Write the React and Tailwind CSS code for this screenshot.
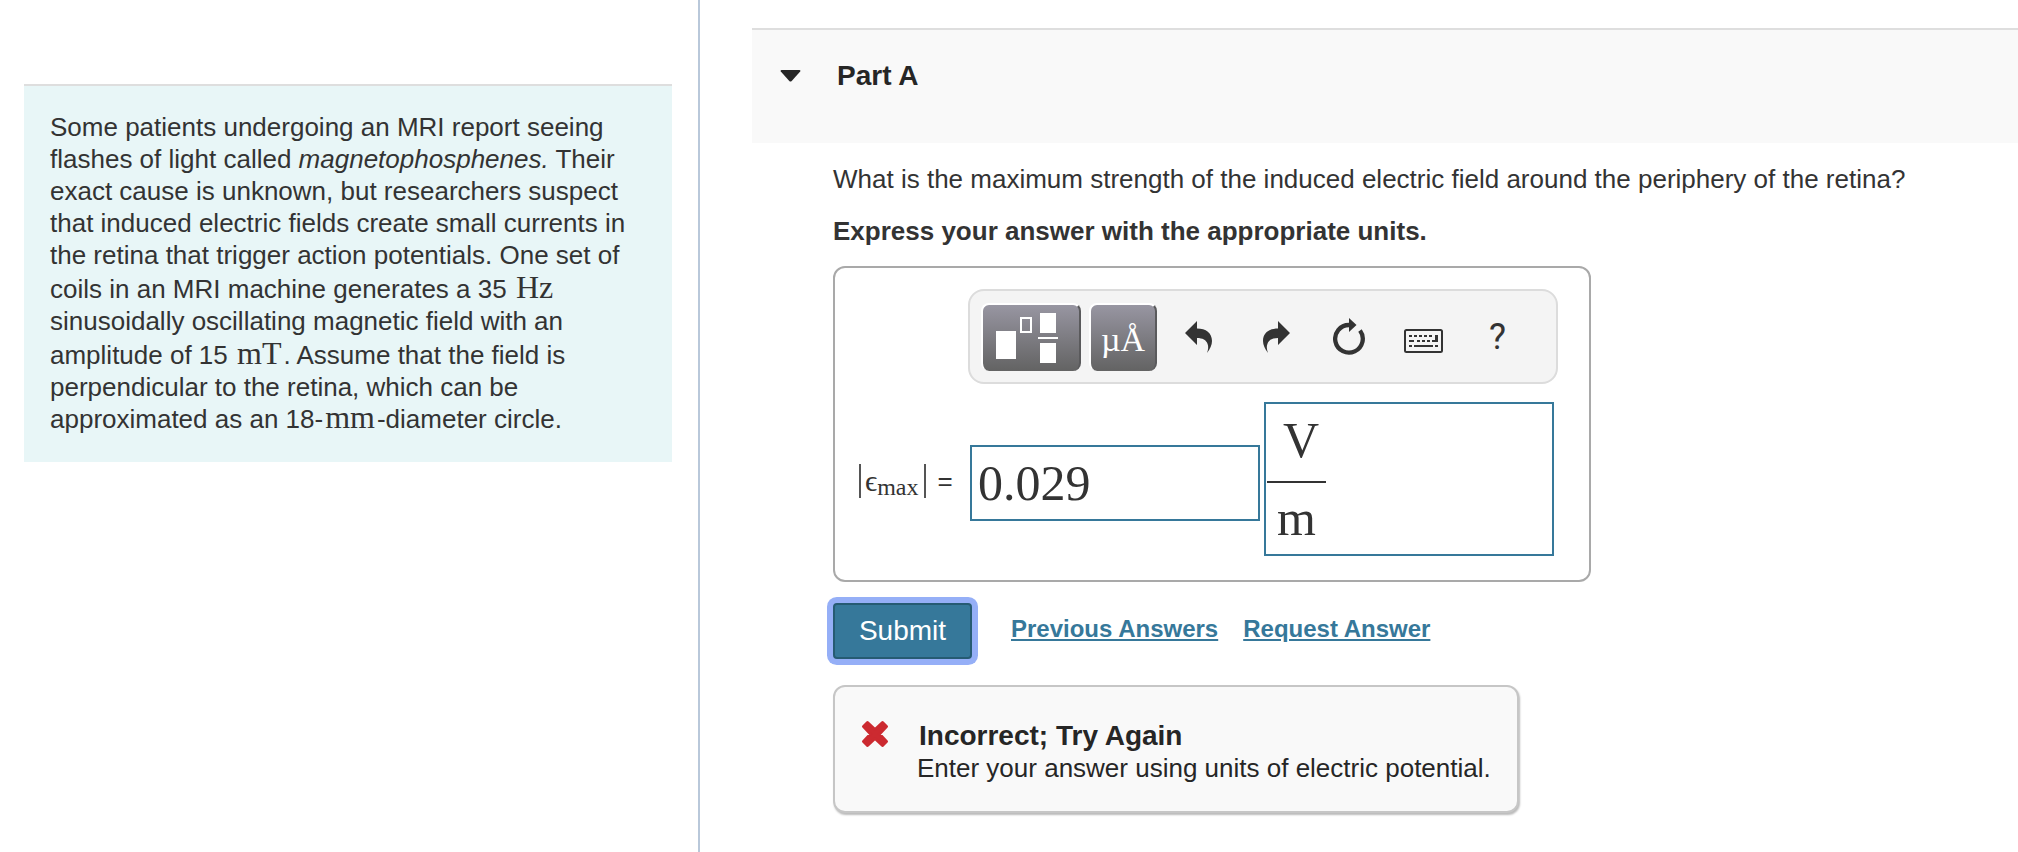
import React, { useState } from "react";

const toolButton =
  "flex h-[68px] items-center justify-center rounded-lg border-t-2 border-l-2 border-r-2 border-t-white border-l-white border-r-[#5a5a5c] bg-linear-to-b from-[#9896a2] to-[#636363] text-white";

const unitText = "mx-0.5 font-['Liberation_Serif',serif] text-[32px]";

const TemplatesIcon = () => (
  <svg width="64" height="52" viewBox="0 0 64 52" fill="white" aria-hidden="true">
    <rect x="0" y="19" width="20" height="28" />
    <rect x="25" y="6" width="10" height="14" fill="none" stroke="white" strokeWidth="2" />
    <rect x="44" y="1" width="16" height="20" />
    <rect x="42" y="25" width="20" height="2" />
    <rect x="44" y="31" width="16" height="20" />
  </svg>
);

const UndoIcon = ({ flip }) => (
  <svg width="28" height="32" viewBox="0 0 28 32" fill="#333" aria-hidden="true">
    <path
      transform={flip ? "matrix(-1 0 0 1 28 0)" : undefined}
      d="M0 12 12 0v7.500C21 7.500 27 12 27 20c0 4-2 8-5 12 1.300-3.500 1.600-6.500.600-9-1.300-4-5-6-10.600-6v7Z"
    />
  </svg>
);

const ResetIcon = () => (
  <svg width="32" height="37" viewBox="0 0 32 37" aria-hidden="true">
    <path d="M27 12.500A13.800 13.800 0 1 1 16 7" fill="none" stroke="#333" strokeWidth="4.300" />
    <path d="M16 0v14l7.500-7Z" fill="#333" />
  </svg>
);

const KeyboardIcon = () => (
  <svg width="39" height="24" viewBox="0 0 39 24" fill="#333" aria-hidden="true">
    <rect x="1" y="1" width="37" height="22" rx="1.500" fill="none" stroke="#333" strokeWidth="2" />
    <path d="M5 6h3v2H5zM10 6h3v2h-3zM15 6h3v2h-3zM20 6h3v2h-3zM25 6h3v2h-3zM31 6h3v7h-6v-2h3zM5 11h5v2H5zM13 11h3v2h-3zM18 11h3v2h-3zM23 11h3v2h-3zM5 16h3v2H5zM10 16h19v2H10zM31 16h3v2h-3z" />
  </svg>
);

const WrongIcon = () => (
  <svg width="28" height="28" viewBox="0 0 28 28" aria-hidden="true">
    <path
      d="M6.500 2.500 14 9.500 21.500 2.500 25.500 6.500 18.500 14 25.500 21.500 21.500 25.500 14 18.500 6.500 25.500 2.500 21.500 9.500 14 2.500 6.500Z"
      fill="#cc2a30"
      stroke="#cc2a30"
      strokeWidth="3"
      strokeLinejoin="round"
    />
  </svg>
);

const ProblemStatement = () => (
  <aside className="w-[700px] shrink-0 border-r-2 border-[#b9c8da] pt-[84px] pr-[26px] pl-6">
    <p className="border-t-2 border-[#dedede] bg-[#e8f6f7] pt-[25px] pr-8 pb-[27px] pl-[26px] text-[26px] leading-8">
      Some patients undergoing an MRI report seeing flashes of light called{" "}
      <em>magnetophosphenes.</em> Their exact cause is unknown, but researchers
      suspect that induced electric fields create small currents in the retina
      that trigger action potentials. One set of coils in an MRI machine
      generates a 35 <span className={unitText}>Hz</span> sinusoidally
      oscillating magnetic field with an amplitude of 15{" "}
      <span className={unitText}>mT</span>. Assume that the field is
      perpendicular to the retina, which can be approximated as an
      18-<span className={`leading-7 ${unitText}`}>mm</span>-diameter circle.
    </p>
  </aside>
);

const AnswerForm = () => {
  const [value, setValue] = useState("0.029");
  const [numerator, setNumerator] = useState("V");
  const [denominator, setDenominator] = useState("m");

  return (
    <div className="w-[758px] rounded-xl border-2 border-[#a9a9a9] pt-[21px] pr-[31px] pb-6 pl-6">
      {/* Toolbar */}
      <div className="ml-[109px] flex h-[95px] items-center rounded-2xl border-2 border-[#dcdcdc] bg-[#f4f4f4] pl-[11px]">
        <button type="button" aria-label="Templates" className={`w-[100px] pr-1.5 ${toolButton}`}>
          <TemplatesIcon />
        </button>
        <button
          type="button"
          aria-label="Symbols"
          className={`ml-2 w-[68px] pt-1 font-['Liberation_Serif',serif] text-[34px] ${toolButton}`}
        >
          µÅ
        </button>
        <button type="button" aria-label="Undo" className="ml-7">
          <UndoIcon />
        </button>
        <button type="button" aria-label="Redo" className="ml-[49px]">
          <UndoIcon flip />
        </button>
        <button type="button" aria-label="Reset" className="ml-[43px]">
          <ResetIcon />
        </button>
        <button type="button" aria-label="Keyboard shortcuts" className="ml-[39px] pt-2">
          <KeyboardIcon />
        </button>
        <button type="button" aria-label="Help" className="ml-[46px] font-[Roboto,sans-serif] text-[36px]">
          ?
        </button>
      </div>

      {/* Value and units */}
      <div className="mt-[18px] flex items-center">
        <label htmlFor="value" className="flex w-[111px] items-center pt-1 text-[26px]">
          <span className="flex h-[34px] items-center border-x-2 border-[#555] pr-1.5 pl-1 font-['Liberation_Serif',serif] text-[30px] leading-none">
            ϵ<span className="pt-3 text-[24px]">max</span>
          </span>
          <span className="ml-[11px]">=</span>
        </label>
        <input
          id="value"
          value={value}
          onChange={(e) => setValue(e.target.value)}
          className="mt-2 h-[76px] w-[290px] border-2 border-[#36789a] px-1.5 font-['Liberation_Serif',serif] text-[50px] outline-none"
        />
        <div className="ml-1 flex h-[154px] w-[290px] flex-col border-2 border-[#36789a] pl-px font-['Liberation_Serif',serif] text-[50px]">
          <input
            aria-label="Units numerator"
            value={numerator}
            onChange={(e) => setNumerator(e.target.value)}
            className="h-[79px] w-[59px] border-b-2 border-[#333] pb-1.5 pl-4 outline-none"
          />
          <input
            aria-label="Units denominator"
            value={denominator}
            onChange={(e) => setDenominator(e.target.value)}
            className="h-[70px] w-[59px] pl-2.5 outline-none"
          />
        </div>
      </div>
    </div>
  );
};

const App = () => {
  return (
    <div className="flex min-h-screen bg-white font-['Liberation_Sans',Arial,sans-serif] text-[#333]">
      <ProblemStatement />

      <main className="min-w-0 flex-1 pt-7 pl-[52px]">
        <header className="flex h-[115px] items-start border-t-2 border-[#dedede] bg-[#f9f9f9] pt-7 pl-7 text-[#262626]">
          <button type="button" aria-label="Collapse Part A" className="pt-3">
            <svg width="21" height="12" viewBox="0 0 21 12" fill="#262626" aria-hidden="true">
              <path d="M1.500 0h18q1.500 0 .7 1.500l-8.500 9.500q-1.200 1-2.400 0L.8 1.500Q0 0 1.500 0Z" />
            </svg>
          </button>
          <h1 className="ml-9 text-[28px] leading-9 font-bold">Part A</h1>
        </header>

        <section className="pt-5 pl-[81px] text-[26px] leading-8">
          <p>
            What is the maximum strength of the induced electric field around the
            periphery of the retina?
          </p>
          <p className="mt-5 mb-[19px] font-bold">Express your answer with the appropriate units.</p>

          <AnswerForm />

          <div className="mt-[21px] flex items-center">
            <button
              type="submit"
              className="h-14 w-[139px] rounded-sm border-2 border-[#265b73] bg-[#36789a] text-[28px] text-white ring-6 ring-[#95aff7]"
            >
              Submit
            </button>
            <a href="#previous" className="ml-[39px] pb-1 text-[24px] font-bold text-[#36789a] underline">
              Previous Answers
            </a>
            <a href="#request" className="ml-[25px] pb-1 text-[24px] font-bold text-[#36789a] underline">
              Request Answer
            </a>
          </div>

          {/* Feedback */}
          <div
            role="alert"
            className="mt-[26px] flex h-32 w-[686px] rounded-xl border-2 border-[#c6c6c6] bg-[#f9f9f9] pt-[33px] pl-[26px] text-[#262626] shadow-[1px_2px_2px_#bbb]"
          >
            <WrongIcon />
            <div className="ml-7">
              <h2 className="pl-0.5 text-[28px] font-bold">Incorrect; Try Again</h2>
              <p>Enter your answer using units of electric potential.</p>
            </div>
          </div>
        </section>
      </main>
    </div>
  );
};

export default App;
